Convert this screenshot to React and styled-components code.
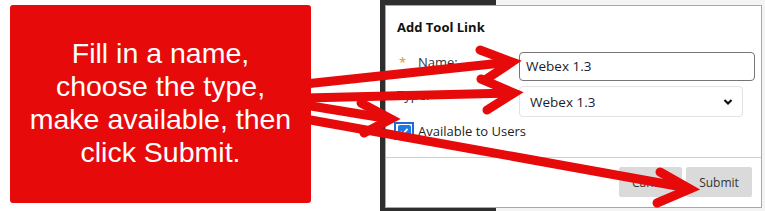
import React from 'react'
import styled, { createGlobalStyle } from 'styled-components'

const GlobalStyle = createGlobalStyle`
	html, body {
		margin: 0;
		padding: 0;
		background: #ffffff;
	}
	body {
		width: 765px;
		height: 211px;
		overflow: hidden;
	}
`

const RED = '#e60a0a'

const Page = styled.div`
	position: relative;
	width: 765px;
	height: 211px;
	display: flex;
	align-items: flex-start;
	background: #ffffff;
`

const Callout = styled.div`
	margin: 5px 0 0 10px;
	width: 301px;
	height: 198px;
	border-radius: 3px;
	background: ${RED};
	color: #ffffff;
	font-family: "Liberation Sans", Arial, sans-serif;
	font-size: 28.5px;
	line-height: 33px;
	text-align: center;
	display: flex;
	align-items: center;
	justify-content: center;
	box-sizing: border-box;
	padding-bottom: 2px;
`

const Backdrop = styled.div`
	margin-left: 69px;
	width: 385px;
	height: 211px;
	box-sizing: border-box;
	padding: 5px 3px 3px 5px;
	background: linear-gradient(to right, #2e2e2e 116px, #f4f4f4 116px);
	display: flex;
`

const Modal = styled.div`
	flex: 1;
	display: flex;
	flex-direction: column;
	background: #ffffff;
	border: 1px solid #a8a8a8;
	font-family: "Open Sans", "Noto Sans", sans-serif;
	color: #222;
`

const Body = styled.div`
	flex: 1;
	padding: 11px 6px 0 11px;
	display: flex;
	flex-direction: column;
`

const Title = styled.div`
	font-size: 13px;
	font-weight: 700;
	line-height: 20px;
	color: #111;
	margin-bottom: 15px;
`

const Row = styled.div`
	display: grid;
	grid-template-columns: 122px 1fr;
	align-items: start;
	margin-bottom: 5px;
`

const Label = styled.div`
	font-size: 13px;
	line-height: 18px;
	color: #333;
	display: flex;
	align-items: center;
	padding-top: ${p => (p.required ? 1 : 0)}px;
	padding-left: ${p => (p.required ? 2 : 0)}px;
`

const Star = styled.span`
	color: #f08a24;
	width: 19px;
	font-size: 13px;
`

const TextField = styled.div`
	width: 236px;
	height: 29px;
	box-sizing: border-box;
	border: 1px solid #767676;
	border-radius: 4px;
	padding: 0 6px;
	font-size: 13.5px;
	line-height: 27px;
	color: #1a1a2e;
`

const Select = styled.div`
	width: 224px;
	height: 31px;
	box-sizing: border-box;
	border: 1px solid #e2e2e2;
	border-radius: 4px;
	padding: 0 9px 0 10px;
	display: flex;
	align-items: center;
	justify-content: space-between;
	font-size: 13.5px;
	color: #1a1a2e;
`

const CheckRow = styled.label`
	display: flex;
	align-items: center;
	gap: 4px;
	margin-left: -3px;
	font-size: 13px;
	color: #222;
`

const CheckFocus = styled.span`
	width: 20px;
	height: 18px;
	box-sizing: border-box;
	border: 2px solid #1b6ed6;
	display: flex;
	align-items: center;
	justify-content: center;
`

const CheckBox = styled.span`
	width: 13px;
	height: 13px;
	border-radius: 2px;
	background: #1f7ae6;
	display: flex;
	align-items: center;
	justify-content: center;
`

const Footer = styled.div`
	border-top: 1px solid #cfcfcf;
	padding: 9px 9px 10px;
	display: flex;
	justify-content: flex-end;
	gap: 4px;
`

const Button = styled.div`
	width: ${p => p.w}px;
	height: 30px;
	border-radius: 2px;
	background: #dadada;
	color: #333;
	font-size: 12px;
	display: flex;
	align-items: center;
	justify-content: center;
`

const Arrows = styled.svg`
	position: absolute;
	left: 0;
	top: 0;
	pointer-events: none;
`

const arrows = [
	{ shaft: '305,84 511,62', head: '480,50 512,62 485,80' },
	{ shaft: '305,98 513,93', head: '481,79 514,93 487,110' },
	{ shaft: '305,105 390,119', head: '361,103 391,119 364,133' },
	{ shaft: '305,119 688,188', head: '660,172 690,189 657,203' },
]

const App = () => {
	return (
		<Page>
			<GlobalStyle />
			<Callout>
				<div>
					Fill in a name,<br />
					choose the type,<br />
					make available, then<br />
					click Submit.
				</div>
			</Callout>
			<Backdrop>
				<Modal>
					<Body>
						<Title>Add Tool Link</Title>
						<Row>
							<Label required>
								<Star>*</Star>Name:
							</Label>
							<TextField>Webex 1.3</TextField>
						</Row>
						<Row>
							<Label>Type:</Label>
							<Select>
								Webex 1.3
								<svg width="10" height="8" viewBox="0 0 10 8">
									<path d="M1.5 2 L5 5.5 L8.5 2" fill="none" stroke="#111" strokeWidth="2.2" />
								</svg>
							</Select>
						</Row>
						<CheckRow>
							<CheckFocus>
								<CheckBox>
									<svg width="10" height="9" viewBox="0 0 10 9">
										<path d="M1.5 4.8 L4 7 L8.5 1.8" fill="none" stroke="#fff" strokeWidth="1.8" />
									</svg>
								</CheckBox>
							</CheckFocus>
							Available to Users
						</CheckRow>
					</Body>
					<Footer>
						<Button w={63}>Cancel</Button>
						<Button w={66}>Submit</Button>
					</Footer>
				</Modal>
			</Backdrop>
			<Arrows width="765" height="211" viewBox="0 0 765 211">
				{arrows.map((a, i) => (
					<g key={i} stroke={RED} strokeWidth="9" fill="none">
						<polyline points={a.shaft} strokeLinecap="butt" />
						<polyline points={a.head} strokeLinecap="round" strokeLinejoin="miter" strokeMiterlimit="10" />
					</g>
				))}
			</Arrows>
		</Page>
	)
}

export default App
